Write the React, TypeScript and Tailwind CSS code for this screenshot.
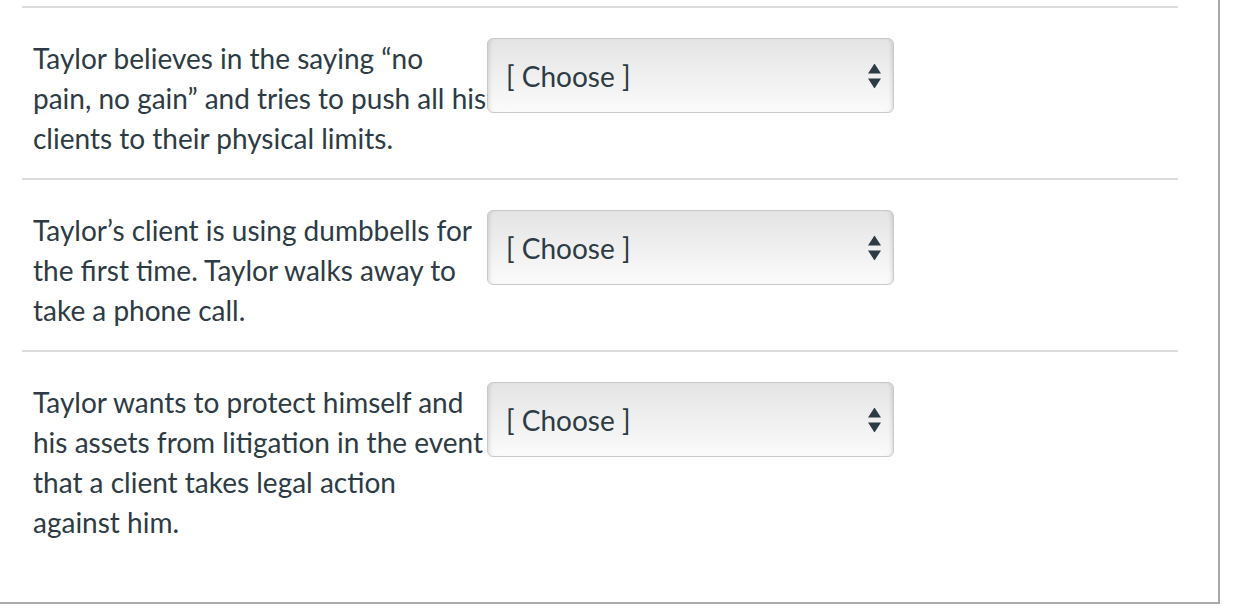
import React from 'react';

const QUESTIONS = [
  'Taylor believes in the saying \u201cno pain, no gain\u201d and tries to push all his clients to their physical limits.',
  'Taylor\u2019s client is using dumbbells for the first time. Taylor walks away to take a phone call.',
  'Taylor wants to protect himself and his assets from litigation in the event that a client takes legal action against him.',
];

function ChooseSelect() {
  return (
    <div className="relative flex h-[75px] w-[407px] shrink-0 items-center rounded-[6px] border border-[#c9c9c9] bg-gradient-to-b from-[#e4e4e4] to-[#fbfbfb] pl-[18px] shadow-[inset_4px_0_4px_-3px_rgba(0,0,0,0.14),inset_-4px_0_4px_-3px_rgba(0,0,0,0.14)]">
      <span className="text-[28px] leading-none text-[#2d3b45]">[ Choose ]</span>
      <svg className="absolute right-[12px] top-1/2 -translate-y-1/2" width="13" height="25" viewBox="0 0 13 25">
        <path d="M6.5 0 L13 10 L0 10 Z" fill="#2d3b45" />
        <path d="M0 15 L13 15 L6.5 25 Z" fill="#2d3b45" />
      </svg>
    </div>
  );
}

export default function App() {
  return (
    <div className="h-[616px] w-[1242px] bg-white" style={{ fontFamily: 'Lato, "Open Sans", sans-serif' }}>
      <div className="h-[604px] w-[1220px] border-r-2 border-b-2 border-[#a9a9a9] pt-[6px] pl-[22px] pr-[40px]">
        {QUESTIONS.map((q) => (
          <div key={q} className="border-t-2 border-[#dcdcdc] pt-[30px] pb-[20px]">
            <div className="flex items-start">
              <p className="w-[465px] shrink-0 pl-[11px] text-[28px] leading-[40px] text-[#2d3b45]">{q}</p>
              <ChooseSelect />
            </div>
          </div>
        ))}
      </div>
    </div>
  );
}
